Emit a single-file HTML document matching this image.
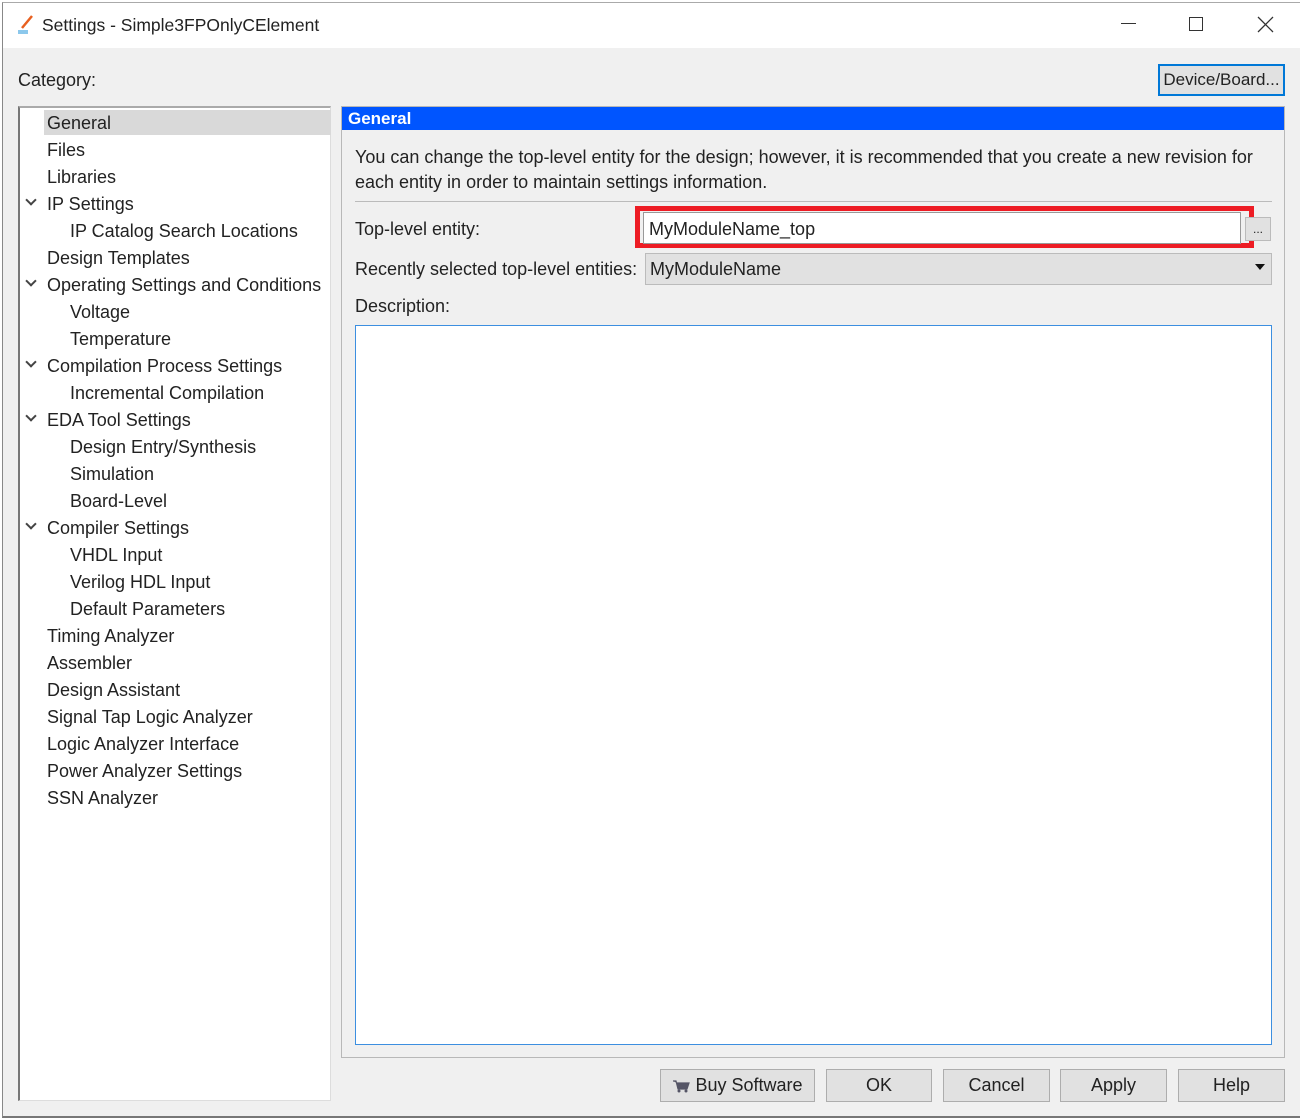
<!DOCTYPE html>
<html><head><meta charset="utf-8"><style>
*{margin:0;padding:0;box-sizing:border-box}
body{width:1300px;height:1119px;background:#fff;font-family:"Liberation Sans",sans-serif;font-size:18px;color:#222;position:relative;overflow:hidden}
.a{position:absolute;white-space:nowrap}
.win{position:absolute;left:2px;top:2px;width:1298px;height:1116px;border-left:1px solid #888;border-top:1px solid #aaa;border-bottom:2px solid #777;background:#f0f0f0}
.title{position:absolute;left:0;top:0;width:1298px;height:45px;background:#fff}
.tree{position:absolute;left:18px;top:106px;width:313px;height:995px;background:#fff;border-left:2px solid #777;border-top:2px solid #aaa;border-right:1px solid #ddd;border-bottom:1px solid #ddd}
.tree div{position:absolute;white-space:nowrap;line-height:27px}
.chev{position:absolute;width:8px;height:8px;border-right:2px solid #444;border-bottom:2px solid #444;transform:rotate(45deg)}
.btn{position:absolute;top:1069px;height:33px;background:#e1e1e1;border:1px solid #adadad;text-align:center;line-height:31px}
</style></head><body>
<div class="win">
<div class="title"></div>
</div>
<svg class="a" style="left:16px;top:14px" width="20" height="22"><path d="M6 14 L16 2" stroke="#e86020" stroke-width="2.5"/><rect x="2" y="16" width="10" height="4" fill="#8cc8ec"/></svg>
<div class="a" style="left:42px;top:15px;font-size:17.5px;color:#222">Settings - Simple3FPOnlyCElement</div>
<div class="a" style="left:1121px;top:23px;width:15px;height:1px;background:#333"></div>
<div class="a" style="left:1189px;top:17px;width:14px;height:14px;border:1px solid #333"></div>
<svg class="a" style="left:1257px;top:16px" width="17" height="17"><path d="M1 1L16 16M16 1L1 16" stroke="#333" stroke-width="1.3"/></svg>

<div class="a" style="left:18px;top:70px">Category:</div>
<div class="a" style="left:1158px;top:64px;width:127px;height:32px;border:2px solid #0078d7;background:#e1e1e1;line-height:28px;text-align:center;font-size:17px">Device/Board...</div>

<div class="tree">
<div style="left:24px;top:2px;width:287px;height:25px;background:#d9d9d9"></div>
<div style="left:27px;top:2px">General</div>
<div style="left:27px;top:29px">Files</div>
<div style="left:27px;top:56px">Libraries</div>
<span class="chev" style="left:7px;top:88px"></span><div style="left:27px;top:83px">IP Settings</div>
<div style="left:50px;top:110px">IP Catalog Search Locations</div>
<div style="left:27px;top:137px">Design Templates</div>
<span class="chev" style="left:7px;top:169px"></span><div style="left:27px;top:164px">Operating Settings and Conditions</div>
<div style="left:50px;top:191px">Voltage</div>
<div style="left:50px;top:218px">Temperature</div>
<span class="chev" style="left:7px;top:250px"></span><div style="left:27px;top:245px">Compilation Process Settings</div>
<div style="left:50px;top:272px">Incremental Compilation</div>
<span class="chev" style="left:7px;top:304px"></span><div style="left:27px;top:299px">EDA Tool Settings</div>
<div style="left:50px;top:326px">Design Entry/Synthesis</div>
<div style="left:50px;top:353px">Simulation</div>
<div style="left:50px;top:380px">Board-Level</div>
<span class="chev" style="left:7px;top:412px"></span><div style="left:27px;top:407px">Compiler Settings</div>
<div style="left:50px;top:434px">VHDL Input</div>
<div style="left:50px;top:461px">Verilog HDL Input</div>
<div style="left:50px;top:488px">Default Parameters</div>
<div style="left:27px;top:515px">Timing Analyzer</div>
<div style="left:27px;top:542px">Assembler</div>
<div style="left:27px;top:569px">Design Assistant</div>
<div style="left:27px;top:596px">Signal Tap Logic Analyzer</div>
<div style="left:27px;top:623px">Logic Analyzer Interface</div>
<div style="left:27px;top:650px">Power Analyzer Settings</div>
<div style="left:27px;top:677px">SSN Analyzer</div>
</div>

<div class="a" style="left:341px;top:106px;width:944px;height:952px;border:1px solid #b8b8b8;background:#f0f0f0"></div>
<div class="a" style="left:342px;top:107px;width:942px;height:23px;background:#0055ff;color:#fff;font-weight:bold;padding-left:6px;line-height:23px;font-size:17px">General</div>
<div class="a" style="left:355px;top:145px;line-height:25px">You can change the top-level entity for the design; however, it is recommended that you create a new revision for<br>each entity in order to maintain settings information.</div>
<div class="a" style="left:355px;top:201px;width:917px;height:1px;background:#bbb"></div>
<div class="a" style="left:355px;top:219px">Top-level entity:</div>
<div class="a" style="left:635px;top:206px;width:619px;height:42px;border:5px solid #ed1c24"></div>
<div class="a" style="left:643px;top:212px;width:598px;height:32px;background:#fff;border:1px solid #999;padding-left:5px;line-height:33px">MyModuleName_top</div>
<div class="a" style="left:1245px;top:217px;width:26px;height:24px;background:#e1e1e1;border:1px solid #bbb;font-size:12px;line-height:22px;text-align:center">...</div>
<div class="a" style="left:355px;top:259px">Recently selected top-level entities:</div>
<div class="a" style="left:645px;top:253px;width:627px;height:32px;background:#e1e1e1;border:1px solid #bbb;padding-left:4px;line-height:31px">MyModuleName</div>
<svg class="a" style="left:1255px;top:264px" width="10" height="6"><path d="M0 0H10L5 6Z" fill="#111"/></svg>
<div class="a" style="left:355px;top:296px">Description:</div>
<div class="a" style="left:355px;top:325px;width:917px;height:720px;background:#fff;border:1px solid #3c8fe0"></div>

<div class="btn" style="left:660px;width:155px"><svg style="vertical-align:-2px" width="18" height="14"><path d="M1 2H4L6 10H15L17 4H5" fill="#556" stroke="#556" stroke-width="1.2"/><circle cx="7" cy="12" r="1.5" fill="#556"/><circle cx="14" cy="12" r="1.5" fill="#556"/></svg> Buy Software</div>
<div class="btn" style="left:826px;width:106px">OK</div>
<div class="btn" style="left:943px;width:107px">Cancel</div>
<div class="btn" style="left:1060px;width:107px">Apply</div>
<div class="btn" style="left:1178px;width:107px">Help</div>
</body></html>
